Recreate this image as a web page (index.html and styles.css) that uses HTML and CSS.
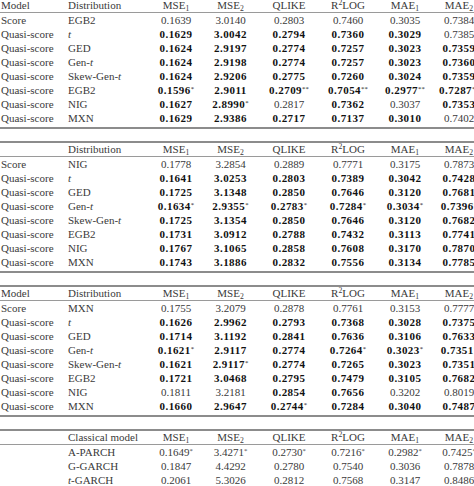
FILE: index.html
```html
<!DOCTYPE html>
<html>
<head>
<meta charset="utf-8">
<link rel="stylesheet" href="styles.css">
</head>
<body>
<div class="sheet">

<table class="block">
<colgroup><col class="c-m"><col class="c-d"><col class="c-1"><col class="c-2"><col class="c-3"><col class="c-4"><col class="c-5"><col class="c-6"></colgroup>
<thead><tr><th class="m">Model</th><th class="d">Distribution</th><th>MSE<sub>1</sub></th><th>MSE<sub>2</sub></th><th>QLIKE</th><th>R<sup class="sq">2</sup>LOG</th><th>MAE<sub>1</sub></th><th>MAE<sub>2</sub></th></tr></thead>
<tbody>
<tr><td class="m">Score</td><td class="d">EGB2</td><td>0.1639</td><td>3.0140</td><td>0.2803</td><td>0.7460</td><td>0.3035</td><td>0.7384</td></tr>
<tr><td class="m">Quasi-score</td><td class="d"><i>t</i></td><td class="b">0.1629</td><td class="b">3.0042</td><td class="b">0.2794</td><td class="b">0.7360</td><td class="b">0.3029</td><td>0.7385</td></tr>
<tr><td class="m">Quasi-score</td><td class="d">GED</td><td class="b">0.1624</td><td class="b">2.9197</td><td class="b">0.2774</td><td class="b">0.7257</td><td class="b">0.3023</td><td class="b">0.7359</td></tr>
<tr><td class="m">Quasi-score</td><td class="d">Gen-<i>t</i></td><td class="b">0.1624</td><td class="b">2.9198</td><td class="b">0.2774</td><td class="b">0.7257</td><td class="b">0.3023</td><td class="b">0.7360</td></tr>
<tr><td class="m">Quasi-score</td><td class="d">Skew-Gen-<i>t</i></td><td class="b">0.1624</td><td class="b">2.9206</td><td class="b">0.2775</td><td class="b">0.7260</td><td class="b">0.3024</td><td class="b">0.7359</td></tr>
<tr><td class="m">Quasi-score</td><td class="d">EGB2</td><td class="b">0.1596<sup>*</sup></td><td class="b">2.9011</td><td class="b">0.2709<sup>**</sup></td><td class="b">0.7054<sup>**</sup></td><td class="b">0.2977<sup>**</sup></td><td class="b">0.7287<sup>**</sup></td></tr>
<tr><td class="m">Quasi-score</td><td class="d">NIG</td><td class="b">0.1627</td><td class="b">2.8990<sup>*</sup></td><td>0.2817</td><td class="b">0.7362</td><td>0.3037</td><td class="b">0.7353</td></tr>
<tr><td class="m">Quasi-score</td><td class="d">MXN</td><td class="b">0.1629</td><td class="b">2.9386</td><td class="b">0.2717</td><td class="b">0.7137</td><td class="b">0.3010</td><td>0.7402</td></tr>
</tbody>
</table>

<table class="block">
<colgroup><col class="c-m"><col class="c-d"><col class="c-1"><col class="c-2"><col class="c-3"><col class="c-4"><col class="c-5"><col class="c-6"></colgroup>
<thead><tr><th class="m"></th><th class="d">Distribution</th><th>MSE<sub>1</sub></th><th>MSE<sub>2</sub></th><th>QLIKE</th><th>R<sup class="sq">2</sup>LOG</th><th>MAE<sub>1</sub></th><th>MAE<sub>2</sub></th></tr></thead>
<tbody>
<tr><td class="m">Score</td><td class="d">NIG</td><td>0.1778</td><td>3.2854</td><td>0.2889</td><td>0.7771</td><td>0.3175</td><td>0.7873</td></tr>
<tr><td class="m">Quasi-score</td><td class="d"><i>t</i></td><td class="b">0.1641</td><td class="b">3.0253</td><td class="b">0.2803</td><td class="b">0.7389</td><td class="b">0.3042</td><td class="b">0.7428</td></tr>
<tr><td class="m">Quasi-score</td><td class="d">GED</td><td class="b">0.1725</td><td class="b">3.1348</td><td class="b">0.2850</td><td class="b">0.7646</td><td class="b">0.3120</td><td class="b">0.7681</td></tr>
<tr><td class="m">Quasi-score</td><td class="d">Gen-<i>t</i></td><td class="b">0.1634<sup>*</sup></td><td class="b">2.9355<sup>*</sup></td><td class="b">0.2783<sup>*</sup></td><td class="b">0.7284<sup>*</sup></td><td class="b">0.3034<sup>*</sup></td><td class="b">0.7396<sup>*</sup></td></tr>
<tr><td class="m">Quasi-score</td><td class="d">Skew-Gen-<i>t</i></td><td class="b">0.1725</td><td class="b">3.1354</td><td class="b">0.2850</td><td class="b">0.7646</td><td class="b">0.3120</td><td class="b">0.7682</td></tr>
<tr><td class="m">Quasi-score</td><td class="d">EGB2</td><td class="b">0.1731</td><td class="b">3.0912</td><td class="b">0.2788</td><td class="b">0.7432</td><td class="b">0.3113</td><td class="b">0.7741</td></tr>
<tr><td class="m">Quasi-score</td><td class="d">NIG</td><td class="b">0.1767</td><td class="b">3.1065</td><td class="b">0.2858</td><td class="b">0.7608</td><td class="b">0.3170</td><td class="b">0.7870</td></tr>
<tr><td class="m">Quasi-score</td><td class="d">MXN</td><td class="b">0.1743</td><td class="b">3.1886</td><td class="b">0.2832</td><td class="b">0.7556</td><td class="b">0.3134</td><td class="b">0.7785</td></tr>
</tbody>
</table>

<table class="block">
<colgroup><col class="c-m"><col class="c-d"><col class="c-1"><col class="c-2"><col class="c-3"><col class="c-4"><col class="c-5"><col class="c-6"></colgroup>
<thead><tr><th class="m">Model</th><th class="d">Distribution</th><th>MSE<sub>1</sub></th><th>MSE<sub>2</sub></th><th>QLIKE</th><th>R<sup class="sq">2</sup>LOG</th><th>MAE<sub>1</sub></th><th>MAE<sub>2</sub></th></tr></thead>
<tbody>
<tr><td class="m">Score</td><td class="d">MXN</td><td>0.1755</td><td>3.2079</td><td>0.2878</td><td>0.7761</td><td>0.3153</td><td>0.7777</td></tr>
<tr><td class="m">Quasi-score</td><td class="d"><i>t</i></td><td class="b">0.1626</td><td class="b">2.9962</td><td class="b">0.2793</td><td class="b">0.7368</td><td class="b">0.3028</td><td class="b">0.7375</td></tr>
<tr><td class="m">Quasi-score</td><td class="d">GED</td><td class="b">0.1714</td><td class="b">3.1192</td><td class="b">0.2841</td><td class="b">0.7636</td><td class="b">0.3106</td><td class="b">0.7633</td></tr>
<tr><td class="m">Quasi-score</td><td class="d">Gen-<i>t</i></td><td class="b">0.1621<sup>*</sup></td><td class="b">2.9117</td><td class="b">0.2774</td><td class="b">0.7264<sup>*</sup></td><td class="b">0.3023<sup>*</sup></td><td class="b">0.7351<sup>*</sup></td></tr>
<tr><td class="m">Quasi-score</td><td class="d">Skew-Gen-<i>t</i></td><td class="b">0.1621</td><td class="b">2.9117<sup>*</sup></td><td class="b">0.2774</td><td class="b">0.7265</td><td class="b">0.3023</td><td class="b">0.7351</td></tr>
<tr><td class="m">Quasi-score</td><td class="d">EGB2</td><td class="b">0.1721</td><td class="b">3.0468</td><td class="b">0.2795</td><td class="b">0.7479</td><td class="b">0.3105</td><td class="b">0.7682</td></tr>
<tr><td class="m">Quasi-score</td><td class="d">NIG</td><td>0.1811</td><td>3.2181</td><td class="b">0.2854</td><td class="b">0.7656</td><td>0.3202</td><td>0.8019</td></tr>
<tr><td class="m">Quasi-score</td><td class="d">MXN</td><td class="b">0.1660</td><td class="b">2.9647</td><td class="b">0.2744<sup>*</sup></td><td class="b">0.7284</td><td class="b">0.3040</td><td class="b">0.7487</td></tr>
</tbody>
</table>

<table class="block">
<colgroup><col class="c-m"><col class="c-d"><col class="c-1"><col class="c-2"><col class="c-3"><col class="c-4"><col class="c-5"><col class="c-6"></colgroup>
<thead><tr><th class="m"></th><th class="d">Classical model</th><th>MSE<sub>1</sub></th><th>MSE<sub>2</sub></th><th>QLIKE</th><th>R<sup class="sq">2</sup>LOG</th><th>MAE<sub>1</sub></th><th>MAE<sub>2</sub></th></tr></thead>
<tbody>
<tr><td class="m"></td><td class="d">A-PARCH</td><td>0.1649<sup>*</sup></td><td>3.4271<sup>*</sup></td><td>0.2730<sup>*</sup></td><td>0.7216<sup>*</sup></td><td>0.2982<sup>*</sup></td><td>0.7425<sup>*</sup></td></tr>
<tr><td class="m"></td><td class="d">G-GARCH</td><td>0.1847</td><td>4.4292</td><td>0.2780</td><td>0.7540</td><td>0.3036</td><td>0.7878</td></tr>
<tr><td class="m"></td><td class="d"><i>t</i>-GARCH</td><td>0.2061</td><td>5.3026</td><td>0.2812</td><td>0.7568</td><td>0.3147</td><td>0.8486</td></tr>
</tbody>
</table>

</div>
</body>
</html>
```

FILE: styles.css
```css
html, body {
  margin: 0;
  padding: 0;
  background: #ffffff;
  overflow: hidden;
}

body {
  width: 474px;
  height: 486px;
  font-family: "Liberation Serif", "Times New Roman", serif;
  font-size: 11px;
  color: #3a3a3a;
}

.sheet {
  width: 484px;
  margin-top: -3px;
}

.block {
  width: 484px;
  table-layout: fixed;
  border-collapse: separate;
  border-spacing: 0;
  border-top: 2px solid #8c8c8c;
  border-bottom: 2px solid #8c8c8c;
  padding: 0 0 2px 0;
  margin: 0 0 12px 0;
}

.c-m { width: 66px; }
.c-d { width: 83px; }
.c-1 { width: 54px; }
.c-2 { width: 55px; }
.c-3 { width: 62px; }
.c-4 { width: 56px; }
.c-5 { width: 58px; }
.c-6 { width: 50px; }

.block th {
  height: 13px;
  line-height: 13px;
  padding: 0;
  font-weight: normal;
  text-align: center;
  white-space: nowrap;
  color: #3a3a3a;
  border-bottom: 1px solid #9a9a9a;
}

.block td {
  height: 14px;
  line-height: 14px;
  padding: 0;
  text-align: center;
  white-space: nowrap;
}

.block .m {
  text-align: left;
  padding-left: 1px;
}

.block .d {
  text-align: left;
  padding-left: 2px;
}

.block td.b {
  font-weight: bold;
  color: #111111;
  letter-spacing: 0.45px;
}

sub {
  font-size: 0.7em;
  line-height: 0;
  vertical-align: -0.3em;
}

sup {
  font-size: 0.62em;
  line-height: 0;
  vertical-align: 0.45em;
  font-weight: normal;
  letter-spacing: 0;
}

sup.sq {
  font-size: 0.7em;
  vertical-align: 0.5em;
}
```
